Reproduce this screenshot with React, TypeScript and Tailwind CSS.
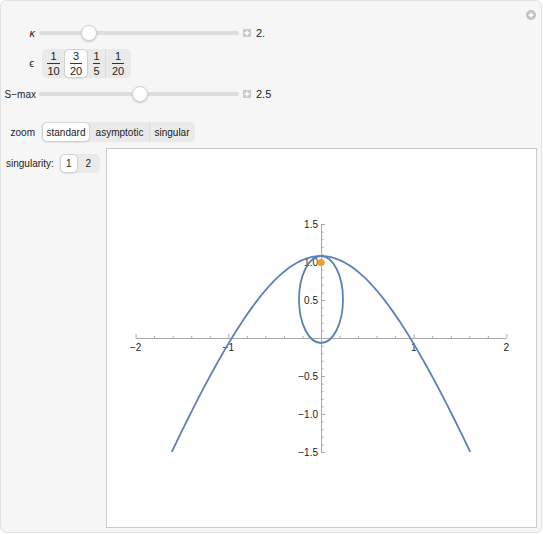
import React from 'react'

const X = (x: number) => 321 + 92.7 * x
const Y = (y: number) => 338 - 76 * y

function curvePath() {
  const A = 4.887
  const B = 14.5
  const C = 10.14
  const pts: string[] = []
  const n = 120
  for (let i = 0; i <= n; i++) {
    const x = -1.61 + (3.22 * i) / n
    const y = A - Math.sqrt(B + C * x * x)
    pts.push(`${i === 0 ? 'M' : 'L'}${X(x).toFixed(2)},${Y(y).toFixed(2)}`)
  }
  return pts.join(' ')
}

function PlusBox() {
  return (
    <span className="flex h-[8px] w-[8px] items-center justify-center rounded-[1px] bg-[#c9c9c9]">
      <svg width="6" height="6" viewBox="0 0 6 6">
        <path d="M3 0.5V5.5M0.5 3H5.5" stroke="white" strokeWidth="1.4" />
      </svg>
    </span>
  )
}

function Slider({ thumb }: { thumb: string }) {
  return (
    <div className="relative h-[4px] w-[200px] rounded-full bg-[#dddddd]">
      <div
        className={`absolute top-[-6px] h-[16px] w-[16px] rounded-full border border-[#d4d4d4] bg-white shadow-[0_1px_2px_rgba(0,0,0,0.18)] ${thumb}`}
      />
    </div>
  )
}

function Frac({ n, d }: { n: string; d: string }) {
  return (
    <span className="flex flex-col items-center text-[11px] leading-[10px] text-[#222]">
      <span>{n}</span>
      <span className="my-[2px] h-px w-full bg-[#333]" />
      <span>{d}</span>
    </span>
  )
}

function Plot() {
  const xTicks: number[] = []
  for (let i = -20; i <= 20; i++) if (i !== 0) xTicks.push(i / 10)
  const yTicks: number[] = []
  for (let i = -15; i <= 15; i++) if (i !== 0) yTicks.push(i / 10)
  return (
    <svg width="429" height="378" viewBox="107 149 429 378" className="block">
      <g stroke="#a8a8a8" strokeWidth="1">
        <line x1={X(-2)} y1={338.5} x2={X(2)} y2={338.5} />
        <line x1={321.5} y1={Y(1.5)} x2={321.5} y2={Y(-1.5)} />
        {xTicks
          .filter((t) => Math.round(t * 10) % 2 === 0)
          .map((t) => {
            const major = Math.round(t * 10) % 10 === 0
            return (
              <line
                key={`x${t}`}
                x1={X(t) + 0.5}
                x2={X(t) + 0.5}
                y1={338}
                y2={major ? 334 : 336}
              />
            )
          })}
        {yTicks.map((t) => {
          const major = Math.round(t * 10) % 5 === 0
          return (
            <line key={`y${t}`} x1={321} x2={major ? 325 : 323.5} y1={Y(t) + 0.5} y2={Y(t) + 0.5} />
          )
        })}
      </g>
      <g fontSize="10" fill="#222" fontFamily="'Liberation Sans', Arial, sans-serif">
        {[
          [-2, '−2'],
          [-1, '−1'],
          [1, '1'],
          [2, '2'],
        ].map(([v, s]) => (
          <text key={`xl${v}`} x={X(v as number)} y={351} textAnchor="middle">
            {s}
          </text>
        ))}
        {[
          [1.5, '1.5'],
          [1, '1.0'],
          [0.5, '0.5'],
          [-0.5, '−0.5'],
          [-1, '−1.0'],
          [-1.5, '−1.5'],
        ].map(([v, s]) => (
          <text key={`yl${v}`} x={318} y={Y(v as number) + 4} textAnchor="end">
            {s}
          </text>
        ))}
      </g>
      <path d={curvePath()} fill="none" stroke="#5e81b5" strokeWidth="1.8" />
      <ellipse cx={321} cy={299.5} rx={22} ry={43.5} fill="none" stroke="#5e81b5" strokeWidth="1.8" />
      <circle cx={321} cy={262.5} r={3.6} fill="#e8a22c" />
    </svg>
  )
}

export default function App() {
  return (
    <div className="h-[534px] w-[543px] bg-white font-['Liberation_Sans',Arial,sans-serif] text-[10px] text-[#222]">
      <div className="relative h-[533px] w-[542px] rounded-[6px] border border-[#e3e3e3] bg-[#f6f6f6]">
        <span className="absolute right-[5px] top-[9px] flex h-[10px] w-[10px] items-center justify-center rounded-full bg-[#c2c2c2]">
          <svg width="6" height="6" viewBox="0 0 6 6">
            <path d="M3 0.5V5.5M0.5 3H5.5" stroke="white" strokeWidth="1.5" />
          </svg>
        </span>

        <div className="flex flex-col pt-[24px]">
          {/* kappa */}
          <div className="flex h-[16px] items-center">
            <span className="w-[35px] pr-[1px] text-right text-[11px] italic">κ</span>
            <div className="ml-[3px]">
              <Slider thumb="left-[42px]" />
            </div>
            <span className="ml-[4px]">
              <PlusBox />
            </span>
            <span className="ml-[5px] text-[11px]">2.</span>
          </div>

          {/* epsilon */}
          <div className="mt-[8px] flex h-[29px] items-center">
            <span className="w-[33px] text-right text-[11px]">ϵ</span>
            <div className="ml-[8px] flex h-[29px] items-stretch rounded-[5px] bg-[#eaeaea] px-px">
              <button className="flex w-[21px] items-center justify-center">
                <Frac n="1" d="10" />
              </button>
              <button className="flex w-[24px] items-center justify-center rounded-[5px] border border-[#d3d3d3] bg-white shadow-[0_1px_1px_rgba(0,0,0,0.08)]">
                <Frac n="3" d="20" />
              </button>
              <button className="flex w-[18px] items-center justify-center border-r border-[#dcdcdc]">
                <Frac n="1" d="5" />
              </button>
              <button className="flex w-[24px] items-center justify-center">
                <Frac n="1" d="20" />
              </button>
            </div>
          </div>

          {/* S-max */}
          <div className="mt-[8px] flex h-[16px] items-center">
            <span className="w-[35px] text-right text-[10px]">S−max</span>
            <div className="ml-[3px]">
              <Slider thumb="left-[93px]" />
            </div>
            <span className="ml-[4px]">
              <PlusBox />
            </span>
            <span className="ml-[5px] text-[11px]">2.5</span>
          </div>

          {/* zoom */}
          <div className="mt-[20px] flex h-[20px] items-center">
            <span className="w-[34px] text-right">zoom</span>
            <div className="ml-[6px] flex h-[20px] items-stretch rounded-[5px] bg-[#eaeaea] px-px">
              <button className="flex w-[48px] items-center justify-center rounded-[5px] border border-[#d3d3d3] bg-white shadow-[0_1px_1px_rgba(0,0,0,0.08)]">
                standard
              </button>
              <button className="flex w-[60px] items-center justify-center border-r border-[#dcdcdc]">
                asymptotic
              </button>
              <button className="flex w-[44px] items-center justify-center">singular</button>
            </div>
          </div>

          {/* singularity + plot */}
          <div className="mt-[6px] flex items-start">
            <div className="flex w-[105px] items-center pt-[6px]">
              <span className="ml-[5px]">singularity:</span>
              <div className="ml-[5px] flex h-[19px] items-stretch rounded-[5px] bg-[#eaeaea] px-px">
                <button className="flex w-[18px] items-center justify-center rounded-[5px] border border-[#d3d3d3] bg-white shadow-[0_1px_1px_rgba(0,0,0,0.08)]">
                  1
                </button>
                <button className="flex w-[21px] items-center justify-center">2</button>
              </div>
            </div>
            <div className="h-[380px] w-[431px] border border-[#cbcbcb] bg-white">
              <Plot />
            </div>
          </div>
        </div>
      </div>
    </div>
  )
}
